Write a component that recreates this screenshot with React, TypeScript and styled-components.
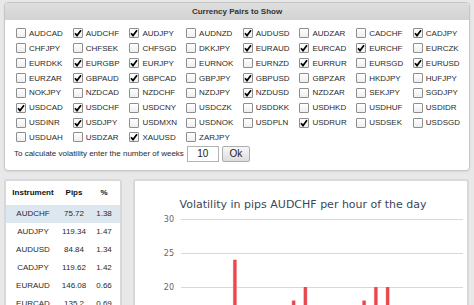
import React from "react";
import styled, { createGlobalStyle } from "styled-components";

const GlobalStyle = createGlobalStyle`
  html, body {
    margin: 0;
    padding: 0;
    background: #e8e8e8;
    font-family: "Liberation Sans", Arial, sans-serif;
    overflow: hidden;
  }
`;

const Page = styled.div`
  width: 474px;
  height: 305px;
  box-sizing: border-box;
  padding: 2px 4px 0 4px;
  overflow: hidden;
`;

const TopPanel = styled.section`
  width: 466px;
  box-sizing: border-box;
  border: 1px solid #c6c6c6;
  border-radius: 4px;
  background: #ffffff;
  overflow: hidden;
  box-shadow: 0 1px 2px rgba(0, 0, 0, 0.08);
`;

const PanelHeader = styled.div`
  height: 17px;
  line-height: 17px;
  background: linear-gradient(#dedede, #d3d3d3);
  text-align: center;
  font-weight: bold;
  font-size: 8px;
  color: #333;
`;

const PanelBody = styled.div`
  padding: 6px 0 8px 11px;
`;

const PairGrid = styled.div`
  display: grid;
  grid-template-columns: repeat(8, 56.7px);
  grid-auto-rows: 14.86px;
`;

const PairItem = styled.label`
  display: flex;
  align-items: center;
  gap: 3px;
  font-size: 8px;
  color: #2a2a2a;
  white-space: nowrap;
`;

const Box = styled.span<{ $checked: boolean }>`
  width: 10px;
  height: 10px;
  box-sizing: border-box;
  border: 1px solid #8e8e8e;
  border-radius: 1px;
  background: linear-gradient(#ffffff, #eeeeee);
  display: flex;
  align-items: center;
  justify-content: center;
  flex: none;
`;

const WeeksRow = styled.div`
  display: flex;
  align-items: center;
  margin: 1px 0 0 -2px;
  height: 16px;
  font-size: 8px;
  color: #2a2a2a;
`;

const WeeksText = styled.span`
  white-space: nowrap;
  margin-right: 3px;
`;

const WeeksInput = styled.input`
  width: 32px;
  height: 16px;
  box-sizing: border-box;
  border: 1px solid #b3b3b3;
  padding: 0;
  margin: 0 3px 0 0;
  text-align: center;
  font-family: "Liberation Sans", Arial, sans-serif;
  font-size: 10px;
  color: #222;
  outline: none;
`;

const OkButton = styled.button`
  width: 28px;
  height: 16px;
  box-sizing: border-box;
  padding: 0;
  border: 1px solid #adadad;
  border-radius: 2px;
  background: linear-gradient(#f7f7f7, #dddddd);
  font-family: "Liberation Sans", Arial, sans-serif;
  font-size: 10px;
  color: #222;
`;

const BottomRow = styled.div`
  display: flex;
  gap: 11px;
  margin-top: 8px;
  align-items: flex-start;
`;

const SidePanel = styled.section`
  width: 118px;
  height: 140px;
  box-sizing: border-box;
  border: 2px solid #d8d8d8;
  border-radius: 3px;
  background: #ffffff;
  overflow: hidden;
`;

const Table = styled.table`
  width: 100%;
  border-collapse: collapse;
  table-layout: fixed;
  font-size: 8px;
  color: #2a2a2a;
`;

const HeadCell = styled.th<{ $w: number }>`
  width: ${(p) => p.$w}px;
  height: 24px;
  padding: 0;
  font-weight: bold;
  text-align: center;
  color: #111;
`;

const Row = styled.tr<{ $active?: boolean }>`
  height: 18px;
  background: ${(p) => (p.$active ? "#dde7f0" : "transparent")};
`;

const Cell = styled.td`
  padding: 0;
  text-align: center;
`;

const ChartPanel = styled.section`
  width: 336px;
  height: 140px;
  box-sizing: border-box;
  border: 2px solid #d8d8d8;
  border-radius: 3px;
  background: #ffffff;
  overflow: hidden;
`;

const ChartTitle = styled.div`
  padding-top: 17px;
  height: 14px;
  line-height: 14px;
  text-align: center;
  padding-left: 4px;
  font-family: "DejaVu Sans", "Lucida Grande", sans-serif;
  font-size: 11px;
  color: #3b4756;
  white-space: nowrap;
`;

const ChartSvg = styled.svg`
  display: block;
`;

const rows: [string, boolean][][] = [
  [["AUDCAD", false], ["AUDCHF", true], ["AUDJPY", true], ["AUDNZD", false], ["AUDUSD", true], ["AUDZAR", false], ["CADCHF", false], ["CADJPY", true]],
  [["CHFJPY", false], ["CHFSEK", false], ["CHFSGD", false], ["DKKJPY", false], ["EURAUD", true], ["EURCAD", true], ["EURCHF", true], ["EURCZK", false]],
  [["EURDKK", false], ["EURGBP", true], ["EURJPY", true], ["EURNOK", false], ["EURNZD", false], ["EURRUR", true], ["EURSGD", false], ["EURUSD", true]],
  [["EURZAR", false], ["GBPAUD", true], ["GBPCAD", true], ["GBPJPY", false], ["GBPUSD", true], ["GBPZAR", false], ["HKDJPY", false], ["HUFJPY", false]],
  [["NOKJPY", false], ["NZDCAD", false], ["NZDCHF", false], ["NZDJPY", false], ["NZDUSD", true], ["NZDZAR", false], ["SEKJPY", false], ["SGDJPY", false]],
  [["USDCAD", true], ["USDCHF", true], ["USDCNY", false], ["USDCZK", false], ["USDDKK", false], ["USDHKD", false], ["USDHUF", false], ["USDIDR", false]],
  [["USDINR", false], ["USDJPY", true], ["USDMXN", false], ["USDNOK", false], ["USDPLN", false], ["USDRUR", true], ["USDSEK", false], ["USDSGD", false]],
  [["USDUAH", false], ["USDZAR", false], ["XAUUSD", true], ["ZARJPY", false]],
];

const tableData: [string, string, string][] = [
  ["AUDCHF", "75.72", "1.38"],
  ["AUDJPY", "119.34", "1.47"],
  ["AUDUSD", "84.84", "1.34"],
  ["CADJPY", "119.62", "1.42"],
  ["EURAUD", "146.08", "0.66"],
  ["EURCAD", "135.2", "0.69"],
];

const hourly = [9, 8, 7, 10, 24, 12, 13, 11, 15, 18, 20, 14, 12, 13, 16, 18, 20, 20, 15, 12, 10, 9, 8, 7];

const Check = () => (
  <svg width="8" height="8" viewBox="0 0 8 8">
    <path d="M1 4.2 L3 6.6 L7 1.2" fill="none" stroke="#000" strokeWidth="1.7" />
  </svg>
);

const Chart = () => {
  const top = 7;
  const scale = 6.8;
  const left = 46;
  const right = 328;
  const pitch = (right - left) / 24;
  const yOf = (v: number) => top + (30 - v) * scale;
  return (
    <ChartSvg width="332" height="215" viewBox="0 0 332 215">
      {[30, 25, 20, 15, 10, 5, 0].map((v) => (
        <g key={v}>
          <line x1={left} x2={right} y1={yOf(v) + 0.5} y2={yOf(v) + 0.5} stroke="#d8d8d8" strokeWidth="1" />
          <text x={39} y={yOf(v) + 3} textAnchor="end" fontSize="8" fill="#666" fontFamily="DejaVu Sans, sans-serif">
            {v}
          </text>
        </g>
      ))}
      {hourly.map((v, i) => {
        const cx = left + 1 + pitch * (i + 0.5);
        return (
          <g key={i}>
            <rect x={cx - 2} y={yOf(v)} width={4} height={yOf(0) - yOf(v)} fill="#f7b3b5" />
            <rect x={cx - 1.5} y={yOf(v)} width={3} height={yOf(0) - yOf(v)} fill="#e9474f" />
          </g>
        );
      })}
    </ChartSvg>
  );
};

export default function App() {
  return (
    <>
      <GlobalStyle />
      <Page>
        <TopPanel>
          <PanelHeader>Currency Pairs to Show</PanelHeader>
          <PanelBody>
            <PairGrid>
              {rows.flat().map(([name, checked]) => (
                <PairItem key={name}>
                  <Box $checked={checked}>{checked && <Check />}</Box>
                  {name}
                </PairItem>
              ))}
            </PairGrid>
            <WeeksRow>
              <WeeksText>To calculate volatility enter the number of weeks</WeeksText>
              <WeeksInput defaultValue="10" />
              <OkButton>Ok</OkButton>
            </WeeksRow>
          </PanelBody>
        </TopPanel>
        <BottomRow>
          <SidePanel>
            <Table>
              <thead>
                <tr>
                  <HeadCell $w={54}>Instrument</HeadCell>
                  <HeadCell $w={28}>Pips</HeadCell>
                  <HeadCell $w={32}>%</HeadCell>
                </tr>
              </thead>
              <tbody>
                {tableData.map(([n, p, pct], i) => (
                  <Row key={n} $active={i === 0}>
                    <Cell>{n}</Cell>
                    <Cell>{p}</Cell>
                    <Cell>{pct}</Cell>
                  </Row>
                ))}
              </tbody>
            </Table>
          </SidePanel>
          <ChartPanel>
            <ChartTitle>Volatility in pips AUDCHF per hour of the day</ChartTitle>
            <Chart />
          </ChartPanel>
        </BottomRow>
      </Page>
    </>
  );
}
